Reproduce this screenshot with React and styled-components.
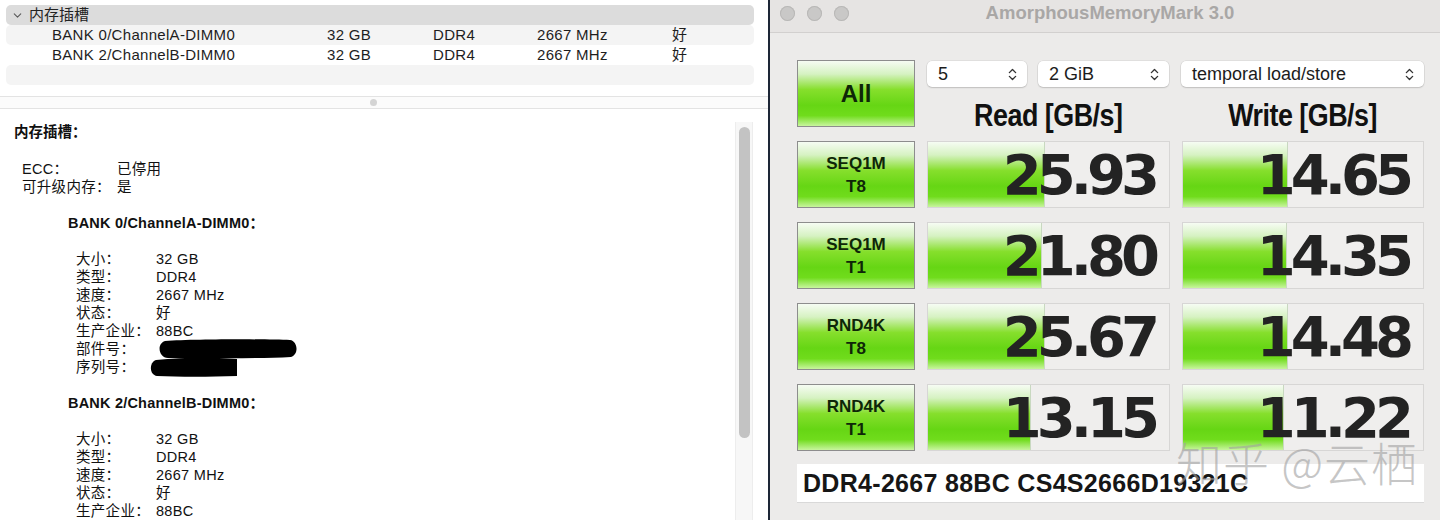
import styled, { createGlobalStyle } from "styled-components";
import { ChevronDown, ChevronsUpDown } from "lucide-react";

const GlobalStyle = createGlobalStyle`
  html, body {
    margin: 0;
    padding: 0;
  }
  body {
    width: 1440px;
    height: 520px;
    overflow: hidden;
    background: #fff;
    font-family: "Liberation Sans", "Noto Sans CJK SC", sans-serif;
  }
`;

const slots = [
  ["BANK 0/ChannelA-DIMM0", "32 GB", "DDR4", "2667 MHz", "好"],
  ["BANK 2/ChannelB-DIMM0", "32 GB", "DDR4", "2667 MHz", "好"],
];

const bankProps = [
  ["大小：", "32 GB"],
  ["类型：", "DDR4"],
  ["速度：", "2667 MHz"],
  ["状态：", "好"],
  ["生产企业：", "88BC"],
];

const banks = [
  { name: "BANK 0/ChannelA-DIMM0：", redacted: true },
  { name: "BANK 2/ChannelB-DIMM0：", redacted: false },
];

const results = [
  { label: ["SEQ1M", "T8"], read: "25.93", readFill: 48.3, write: "14.65", writeFill: 43.4 },
  { label: ["SEQ1M", "T1"], read: "21.80", readFill: 46.7, write: "14.35", writeFill: 43 },
  { label: ["RND4K", "T8"], read: "25.67", readFill: 48.3, write: "14.48", writeFill: 43.4 },
  { label: ["RND4K", "T1"], read: "13.15", readFill: 42.5, write: "11.22", writeFill: 41.7 },
];

export default function App() {
  return (
    <>
      <GlobalStyle />
      <Screen>
        <InfoPane>
          <SlotList>
            <ListRow $tone="head">
              <HeadLabel>
                <ChevronDown size={13} strokeWidth={2} color="#5a5a5a" />
                内存插槽
              </HeadLabel>
            </ListRow>
            {slots.map((s, i) => (
              <ListRow key={s[0]} $tone={i % 2 === 0 ? "stripe" : "plain"}>
                {s.map((c, j) => (
                  <span key={j}>{c}</span>
                ))}
              </ListRow>
            ))}
            <ListRow $tone="stripe" />
          </SlotList>
          <Splitter>
            <SplitDot />
          </Splitter>
          <DetailArea>
            <Details>
              <DetailTitle>内存插槽：</DetailTitle>
              <PropList $indent={22} $keyWidth={95} $gap={19}>
                <span>ECC：</span>
                <span>已停用</span>
                <span>可升级内存：</span>
                <span>是</span>
              </PropList>
              {banks.map((b) => (
                <div key={b.name}>
                  <BankTitle>{b.name}</BankTitle>
                  <PropList $indent={76} $keyWidth={80} $gap={18}>
                    {bankProps.map(([k, v]) => (
                      <Pair key={k}>
                        <span>{k}</span>
                        <span>{v}</span>
                      </Pair>
                    ))}
                    {b.redacted && (
                      <>
                        <span>部件号：</span>
                        <span>
                          <Redact width="142" height="20" viewBox="0 0 142 20">
                            <path d="M9 2 C40 0 110 0 134 1 C142 2 143 16 135 18 C100 20 44 19 12 19 C3 19 0 5 9 2Z" />
                          </Redact>
                        </span>
                        <span>序列号：</span>
                        <span>
                          <Redact width="90" height="20" viewBox="0 0 90 20" style={{ marginLeft: -7 }}>
                            <path d="M7 3 C28 1 50 0 70 1 L88 2 L88 19 C60 20 30 20 8 19 C0 18 0 5 7 3Z" />
                          </Redact>
                        </span>
                      </>
                    )}
                  </PropList>
                </div>
              ))}
            </Details>
            <ScrollTrack>
              <ScrollThumb />
            </ScrollTrack>
          </DetailArea>
        </InfoPane>

        <BenchWindow>
          <TitleBar>
            <Lights>
              <Light />
              <Light />
              <Light />
            </Lights>
            <WindowTitle>AmorphousMemoryMark 3.0</WindowTitle>
            <span />
          </TitleBar>
          <BenchBody>
            <BenchGrid>
              <GreenButton $big>All</GreenButton>
              <ColumnHead>
                <Selects>
                  <Select $w={100}>
                    5
                    <ChevronsUpDown size={15} strokeWidth={2.2} />
                  </Select>
                  <Select $w={131}>
                    2 GiB
                    <ChevronsUpDown size={15} strokeWidth={2.2} />
                  </Select>
                </Selects>
                <Heading>Read [GB/s]</Heading>
              </ColumnHead>
              <ColumnHead>
                <Selects>
                  <Select $w={243} style={{ marginLeft: -1 }}>
                    temporal load/store
                    <ChevronsUpDown size={15} strokeWidth={2.2} />
                  </Select>
                </Selects>
                <Heading>Write [GB/s]</Heading>
              </ColumnHead>

              {results.map((r) => (
                <Row key={r.label.join()}>
                  <GreenButton>
                    {r.label[0]}
                    <br />
                    {r.label[1]}
                  </GreenButton>
                  <Meter>
                    <MeterFill style={{ width: `${r.readFill}%` }} />
                    <MeterValue>{r.read}</MeterValue>
                  </Meter>
                  <Meter>
                    <MeterFill style={{ width: `${r.writeFill}%` }} />
                    <MeterValue>{r.write}</MeterValue>
                  </Meter>
                </Row>
              ))}

              <Comment>DDR4-2667 88BC CS4S2666D19321C</Comment>
            </BenchGrid>
          </BenchBody>
          <Watermark>知乎 @云栖</Watermark>
        </BenchWindow>
      </Screen>
    </>
  );
}

const Screen = styled.div`
  display: flex;
  width: 1440px;
  height: 520px;
  overflow: hidden;
`;

/* ---- left: system information ---- */

const InfoPane = styled.section`
  width: 768px;
  flex-shrink: 0;
  display: flex;
  flex-direction: column;
  background: #fff;
  color: #1e1e1e;
`;

const SlotList = styled.div`
  padding: 5px 14px 11px 6px;
  display: flex;
  flex-direction: column;
`;

const tones = {
  head: "#dcdcdc",
  stripe: "#f4f4f4",
  plain: "transparent",
};

const ListRow = styled.div`
  height: 20px;
  border-radius: 5px;
  background: ${(p) => tones[p.$tone]};
  display: grid;
  grid-template-columns: 275px 106px 104px 135px 1fr;
  align-items: center;
  padding-left: 46px;
  font-size: 15px;
  letter-spacing: 0.3px;
  line-height: 20px;
`;

const HeadLabel = styled.span`
  grid-column: 1 / -1;
  margin-left: -41px;
  display: flex;
  align-items: center;
  gap: 5px;
  letter-spacing: 0;
  color: #222;
`;

const Splitter = styled.div`
  height: 11px;
  border-top: 1px solid #e3e3e3;
  border-bottom: 1px solid #e3e3e3;
  background: #fbfbfb;
  display: flex;
  justify-content: center;
  align-items: center;
  padding-right: 14px;
`;

const SplitDot = styled.span`
  width: 7px;
  height: 7px;
  border-radius: 50%;
  background: #d4d4d4;
  margin-left: -8px;
`;

const DetailArea = styled.div`
  flex: 1;
  display: flex;
  min-height: 0;
  overflow: hidden;
`;

const Details = styled.div`
  flex: 1;
  padding-top: 14px;
  font-size: 14.5px;
  line-height: 18px;
  color: #111;
`;

const DetailTitle = styled.div`
  margin-left: 14px;
  font-weight: 700;
`;

const BankTitle = styled.div`
  margin: 18px 0 0 68px;
  font-weight: 700;
  letter-spacing: 0.2px;
`;

const PropList = styled.div`
  display: grid;
  grid-template-columns: ${(p) => p.$keyWidth}px 1fr;
  margin: ${(p) => p.$gap}px 0 0 ${(p) => p.$indent}px;
  letter-spacing: 0.3px;
`;

const Pair = styled.div`
  display: contents;
`;

const Redact = styled.svg`
  display: block;
  fill: #000;
  margin-top: -1px;
  margin-bottom: -1px;
`;

const ScrollTrack = styled.div`
  width: 16px;
  margin: 13px 15px 0 0;
  background: #f7f7f7;
  border-left: 1px solid #ededed;
  border-right: 1px solid #ededed;
  padding-top: 5px;
  display: flex;
  justify-content: center;
`;

const ScrollThumb = styled.div`
  width: 11px;
  height: 311px;
  border-radius: 6px;
  background: #c3c3c3;
`;

/* ---- right: benchmark window ---- */

const BenchWindow = styled.section`
  position: relative;
  flex: 1;
  display: flex;
  flex-direction: column;
  background: #ecebea;
  border-left: 2px solid #1d2636;
`;

const TitleBar = styled.div`
  height: 32px;
  flex-shrink: 0;
  display: grid;
  grid-template-columns: 1fr auto 1fr;
  align-items: center;
  background: #e6e4e3;
  border-bottom: 1px solid #d2d0cf;
  padding: 0 10px;
`;

const Lights = styled.div`
  display: flex;
  gap: 12px;
  margin-top: -6px;
`;

const Light = styled.span`
  width: 15px;
  height: 15px;
  border-radius: 50%;
  background: #c9c8c7;
  box-shadow: inset 0 0 0 1px #b9b8b7;
`;

const WindowTitle = styled.div`
  font-size: 18.5px;
  font-weight: 700;
  color: #a9a7a6;
  margin-top: -6px;
  padding-left: 10px;
`;

const BenchBody = styled.div`
  padding: 27px 16px 0 27px;
`;

const BenchGrid = styled.div`
  display: grid;
  grid-template-columns: 118px 243px 242px;
  grid-auto-rows: 67px;
  column-gap: 12px;
  row-gap: 14px;
`;

const Row = styled.div`
  display: contents;
`;

const greenGradient = `linear-gradient(
  to bottom,
  #f6fcf3 0%,
  #d6f2c2 20%,
  #86df2c 44%,
  #66d614 68%,
  #70dc1c 84%,
  #c8f59e 100%
)`;

const GreenButton = styled.div`
  box-sizing: border-box;
  border: 1px solid #8d8d8d;
  background: ${greenGradient};
  display: flex;
  flex-direction: column;
  justify-content: center;
  align-items: center;
  text-align: center;
  font-family: "Liberation Sans", sans-serif;
  font-weight: 700;
  color: #0e2608;
  font-size: ${(p) => (p.$big ? "24px" : "17px")};
  line-height: ${(p) => (p.$big ? "24px" : "23px")};
`;

const ColumnHead = styled.div`
  display: flex;
  flex-direction: column;
  align-items: center;
  padding-top: 1px;
`;

const Selects = styled.div`
  display: flex;
  gap: 11px;
  align-self: stretch;
`;

const Select = styled.div`
  box-sizing: border-box;
  width: ${(p) => p.$w}px;
  height: 26px;
  border-radius: 5px;
  background: #fff;
  box-shadow: 0 0 0 0.5px rgba(0, 0, 0, 0.1), 0 1px 1.5px rgba(0, 0, 0, 0.14);
  display: flex;
  align-items: center;
  justify-content: space-between;
  padding: 0 7px 0 11px;
  font-size: 18px;
  color: #1c1c1c;

  svg {
    color: #333;
  }
`;

const Heading = styled.div`
  margin-top: 13px;
  font-family: "Liberation Sans", sans-serif;
  font-weight: 700;
  font-size: 32px;
  line-height: 30px;
  color: #111;
  letter-spacing: -0.6px;
  white-space: nowrap;
  transform: scaleX(0.84);
`;

const Meter = styled.div`
  position: relative;
  box-sizing: border-box;
  border: 1px solid #d7d6d5;
  background: #efeeed;
  display: flex;
  justify-content: flex-end;
  align-items: center;
  overflow: hidden;
`;

const MeterFill = styled.div`
  position: absolute;
  left: 0;
  top: 0;
  bottom: 0;
  background: ${greenGradient};
  border-right: 1px solid #c8d8c0;
`;

const MeterValue = styled.span`
  position: relative;
  font-family: "DejaVu Sans", sans-serif;
  font-weight: 700;
  font-size: 56px;
  letter-spacing: -5px;
  line-height: 60px;
  color: #232323;
  padding-right: 14px;
`;

const Comment = styled.div`
  grid-column: 1 / -1;
  height: 38px;
  margin-top: -1px;
  background: #fff;
  border-bottom: 1px solid #d9d9d9;
  display: flex;
  align-items: center;
  padding-left: 6px;
  font-family: "Liberation Sans", sans-serif;
  font-weight: 700;
  font-size: 25px;
  letter-spacing: 0.3px;
  color: #161616;
`;

const Watermark = styled.div`
  position: absolute;
  left: 406px;
  top: 428px;
  font-family: "Noto Sans CJK SC", sans-serif;
  font-weight: 300;
  font-size: 46px;
  letter-spacing: 1px;
  color: rgba(160, 160, 160, 0.6);
  pointer-events: none;
  white-space: nowrap;
`;
